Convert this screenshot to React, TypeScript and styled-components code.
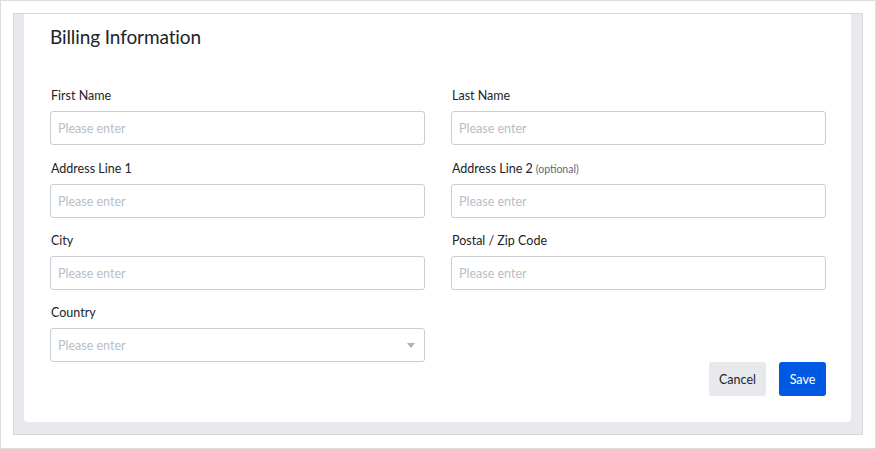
import React from "react";
import styled, { createGlobalStyle } from "styled-components";

const Global = createGlobalStyle`
  html, body { margin: 0; padding: 0; background: #fff; }
  body { font-family: "Lato", "Open Sans", sans-serif; -webkit-font-smoothing: antialiased; }
  * { box-sizing: border-box; }
`;

const Viewport = styled.div`
  width: 876px;
  height: 449px;
  border: 1px solid #dcdcdc;
  padding: 12px 12px 13px 12px;
  background: #fff;
`;

const Frame = styled.div`
  height: 100%;
  border: 1px solid #d9d9d9;
  background: #e8e9ec;
  padding: 0 11px 13px 10px;
  display: flex;
  flex-direction: column;
`;

const Card = styled.div`
  flex: 1;
  background: #fff;
  border-radius: 0 0 4px 4px;
  padding: 11px 25px 26px 26px;
  display: flex;
  flex-direction: column;
`;

const Title = styled.h2`
  margin: 0;
  font-size: 19px;
  line-height: 24px;
  font-weight: 400;
  color: #1d2329;
  letter-spacing: -0.1px;
`;

const Grid = styled.div`
  margin-top: 38px;
  display: grid;
  grid-template-columns: 1fr 1fr;
  column-gap: 26px;
  row-gap: 14px;
`;

const Field = styled.div<{ $row: number }>`
  display: flex;
  flex-direction: column;
  gap: 6px;
  margin-top: ${(p) => (p.$row === 1 ? "1px" : "0")};
`;

const Label = styled.label`
  font-size: 12.5px;
  line-height: 18px;
  color: #1d2329;
  padding-left: 1px;
`;

const Optional = styled.span`
  font-size: 10.5px;
  color: #5c6a7a;
  margin-left: 3px;
`;

const InputBox = styled.div`
  position: relative;
  height: 34px;
  border: 1px solid #c9ced6;
  border-radius: 3px;
  display: flex;
  align-items: center;
  padding: 0 7px;
  font-size: 12.5px;
  color: #b7bec8;
`;

const Caret = styled.span`
  position: absolute;
  right: 9px;
  top: 50%;
  margin-top: -2px;
  width: 0;
  height: 0;
  border-left: 4.5px solid transparent;
  border-right: 4.5px solid transparent;
  border-top: 5px solid #aab2bd;
`;

const Actions = styled.div`
  margin-top: 0;
  display: flex;
  justify-content: flex-end;
  gap: 13px;
`;

const Button = styled.button<{ $primary?: boolean }>`
  height: 34px;
  padding: 0 10px;
  border: none;
  border-radius: 3px;
  font-family: inherit;
  font-size: 12.5px;
  background: ${(p) => (p.$primary ? "#0059e3" : "#e8e9ec")};
  color: ${(p) => (p.$primary ? "#fff" : "#1d2329")};
  min-width: ${(p) => (p.$primary ? "47px" : "57px")};
`;

const fields: { label: string; optional?: boolean; select?: boolean }[] = [
  { label: "First Name" },
  { label: "Last Name" },
  { label: "Address Line 1" },
  { label: "Address Line 2", optional: true },
  { label: "City" },
  { label: "Postal / Zip Code" },
  { label: "Country", select: true },
];

export default function App() {
  return (
    <>
      <Global />
      <Viewport>
        <Frame>
          <Card>
            <Title>Billing Information</Title>
            <Grid>
              {fields.map((f, i) => (
                <Field key={f.label} $row={Math.floor(i / 2)}>
                  <Label>
                    {f.label}
                    {f.optional && <Optional>(optional)</Optional>}
                  </Label>
                  <InputBox>
                    Please enter
                    {f.select && <Caret />}
                  </InputBox>
                </Field>
              ))}
            </Grid>
            <Actions>
              <Button>Cancel</Button>
              <Button $primary>Save</Button>
            </Actions>
          </Card>
        </Frame>
      </Viewport>
    </>
  );
}
